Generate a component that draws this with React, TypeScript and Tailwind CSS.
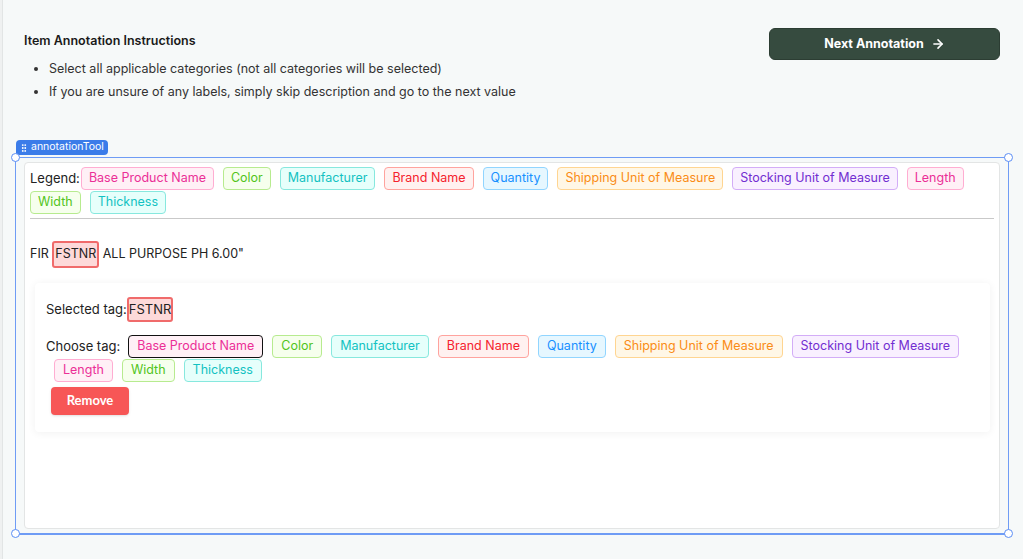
import React, { useState } from "react";
import { ArrowRight, GripVertical } from "lucide-react";

type TagColor = "magenta" | "green" | "cyan" | "red" | "blue" | "orange" | "purple";

interface ITag {
  label: string;
  color: TagColor;
}

const tagStyles: Record<TagColor, string> = {
  magenta: "text-[#eb2f96] bg-[#fff0f6] border-[#ffadd2]",
  green: "text-[#52c41a] bg-[#f6ffed] border-[#b7eb8f]",
  cyan: "text-[#13c2c2] bg-[#e6fffb] border-[#87e8de]",
  red: "text-[#f5222d] bg-[#fff1f0] border-[#ffa39e]",
  blue: "text-[#1890ff] bg-[#e6f7ff] border-[#91d5ff]",
  orange: "text-[#fa8c16] bg-[#fff7e6] border-[#ffd591]",
  purple: "text-[#722ed1] bg-[#f9f0ff] border-[#d3adf7]",
};

const tags: ITag[] = [
  { label: "Base Product Name", color: "magenta" },
  { label: "Color", color: "green" },
  { label: "Manufacturer", color: "cyan" },
  { label: "Brand Name", color: "red" },
  { label: "Quantity", color: "blue" },
  { label: "Shipping Unit of Measure", color: "orange" },
  { label: "Stocking Unit of Measure", color: "purple" },
  { label: "Length", color: "magenta" },
  { label: "Width", color: "green" },
  { label: "Thickness", color: "cyan" },
];

const Tag: React.FC<{
  tag: ITag;
  active?: boolean;
  wide?: boolean;
  className?: string;
  onClick?: () => void;
}> = ({ tag, active, wide, className = "", onClick }) => (
  <span
    onClick={onClick}
    className={`inline-flex h-[23px] cursor-pointer items-center rounded-[4px] border text-[12.5px] leading-none ${
      wide ? "px-[8px]" : "px-[7px]"
    } ${tagStyles[tag.color]} ${active ? "!border-[#111]" : ""} ${className}`}
  >
    {tag.label}
  </span>
);

const Mark: React.FC<{ children: React.ReactNode; className?: string }> = ({ children, className = "" }) => (
  <span
    className={`inline-flex items-center rounded-[3px] border-2 border-[#f06b6b] bg-[#fdd9d9] text-[#222] ${className}`}
  >
    {children}
  </span>
);

const Handle: React.FC<{ className: string }> = ({ className }) => (
  <span
    className={`absolute h-[9px] w-[9px] rounded-full border border-[#5b8ef5] bg-white ${className}`}
  />
);

const App: React.FC = () => {
  const [selected, setSelected] = useState("Base Product Name");

  return (
    <div className="flex min-h-screen w-full bg-[#f6f9f9] font-['Inter',sans-serif] text-[#222]">
      <div className="w-[3px] shrink-0 border-r border-[#e2e5e5] bg-[#eff1f1]" />
      <main className="flex-1 pl-3 pr-[14px]">
        <div className="flex justify-between px-[9px] pt-[28px]">
          <div className="pt-[3px]">
            <div className="text-[12.5px] font-semibold leading-[20px] text-[#1a1a1a]">
              Item Annotation Instructions
            </div>
            <ul className="mt-[6px] list-disc pl-[25px] text-[12.5px] leading-[23px] text-[#333]">
              <li>Select all applicable categories (not all categories will be selected)</li>
              <li>If you are unsure of any labels, simply skip description and go to the next value</li>
            </ul>
          </div>
          <button className="flex h-[32px] w-[231px] items-center justify-center gap-[7px] rounded-[6px] border border-[#2c3d33] bg-[#364b3f] text-[12.5px] font-bold text-white">
            Next Annotation
            <ArrowRight size={14} strokeWidth={2.75} />
          </button>
        </div>

        <div className="relative mt-[54px] h-[378px] border border-b-2 border-[#6f9cf5] px-[8px] pb-[4px] pt-[4px]">
          <div className="absolute -top-[18px] left-0 flex h-[15px] items-center gap-[2px] rounded-t-[4px] rounded-br-[4px] bg-[#3b7ce9] pl-[3px] pr-[4px] text-[10.5px] leading-none text-white">
            <GripVertical size={10} strokeWidth={2.5} />
            annotationTool
          </div>
          <Handle className="-left-[5px] -top-[5px]" />
          <Handle className="-right-[5px] -top-[5px]" />
          <Handle className="-bottom-[5px] -left-[5px]" />
          <Handle className="-bottom-[5px] -right-[5px]" />

          <div className="h-full rounded-[4px] border border-[#e3e5e5] bg-white px-[5px] pt-[4px]">
            <div className="flex flex-wrap items-center gap-y-px text-[13px]">
              <span className="mr-px">Legend:</span>
              {tags.map((tag) => (
                <Tag key={tag.label} tag={tag} className="mr-[9px]" />
              ))}
            </div>
            <hr className="mt-[4px] border-t border-[#c9c9c9]" />

            <div className="mt-[22px] flex items-center text-[12.5px]">
              FIR&nbsp;
              <Mark className="h-[27px] px-px">FSTNR</Mark>
              &nbsp;ALL PURPOSE PH 6.00"
            </div>

            <div className="ml-[5px] mr-[4px] mt-[15px] rounded-[4px] bg-white px-[11px] pb-[17px] pt-[14px] shadow-[0_1px_8px_rgba(0,0,0,0.06)]">
              <div className="flex items-center text-[13px]">
                Selected tag:
                <Mark className="h-[25px] px-0">FSTNR</Mark>
              </div>
              <div className="mt-[13px] flex flex-wrap items-center gap-y-px text-[13px]">
                <span>Choose tag:</span>
                {tags.map((tag) => (
                  <Tag
                    key={tag.label}
                    tag={tag}
                    wide
                    active={selected === tag.label}
                    onClick={() => setSelected(tag.label)}
                    className="ml-2 mr-px"
                  />
                ))}
              </div>
              <button className="ml-[5px] mt-[5px] h-[28px] w-[78px] rounded-[4px] bg-[#f75656] font-['Lato',sans-serif] text-[13px] font-bold text-white shadow-sm">
                Remove
              </button>
            </div>
          </div>
        </div>
      </main>
    </div>
  );
};

export default App;
